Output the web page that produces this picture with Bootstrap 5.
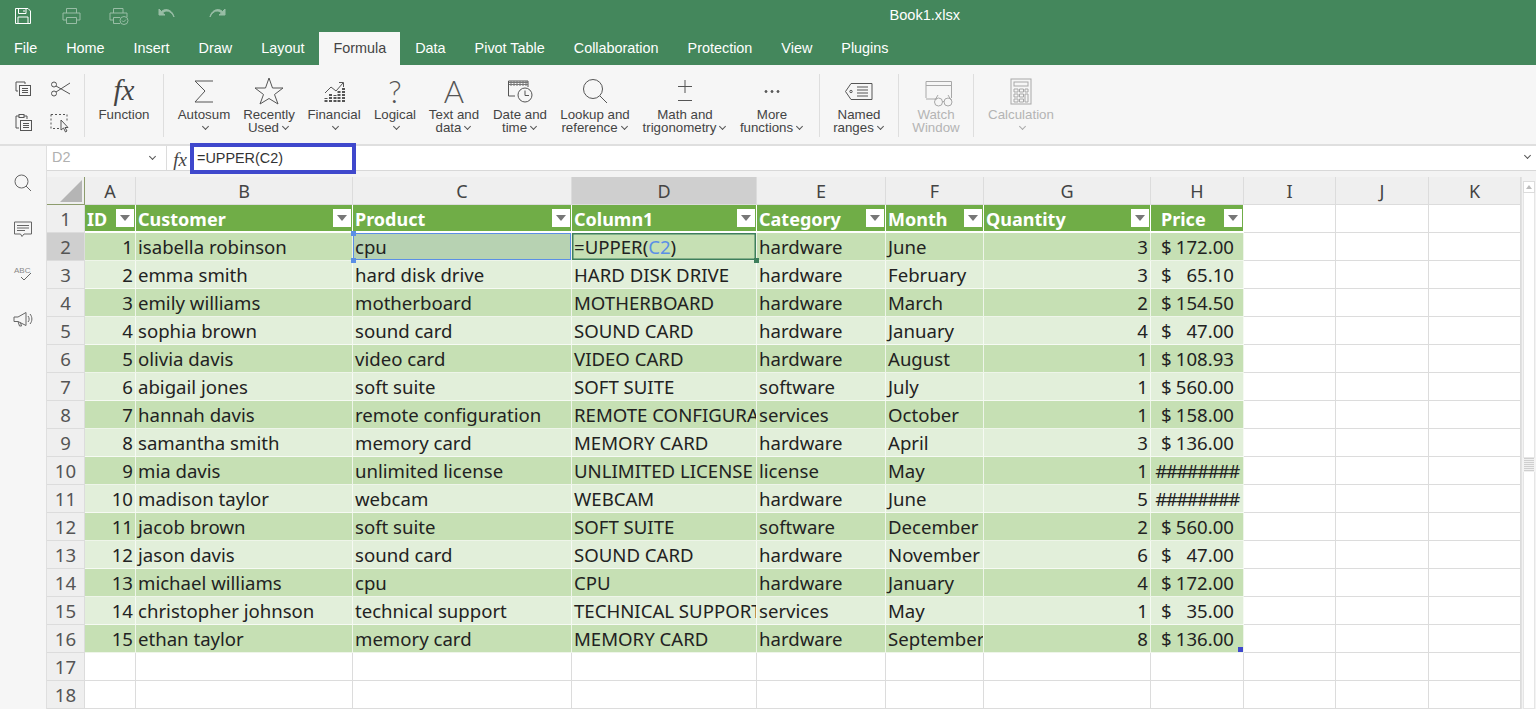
<!DOCTYPE html>
<html lang="en">
<head>
  <meta charset="UTF-8" />
  <title>Book1.xlsx</title>
  <meta name="viewport" content="width=device-width, initial-scale=1" />
  <link href="https://cdn.jsdelivr.net/npm/bootstrap@5.3.3/dist/css/bootstrap.min.css" rel="stylesheet" />
  <style>
    body { height: 709px; overflow: hidden; background: #fff; font-family: "Liberation Sans", Arial, sans-serif; color: #444; }
    svg { display: block; fill: none; stroke: #555; stroke-width: 1; }

    /* title bar and tabs */
    .title-bar { height: 32px; background: #44875c; color: #fff; font-size: 14.6px; }
    .qa-row { margin-left: -1px; }
    .qa-icon { width: 48px; display: flex; justify-content: center; }
    .qa-icon svg { stroke: #fff; }
    .qa-dim { opacity: .45; }
    .qa-last { margin-left: 2px; }
    .doc-title { margin-left: auto; margin-right: 576px; }
    .tab-bar { height: 33px; background: #44875c; }
    .tab-item { padding: 0 14.5px; line-height: 33px; font-size: 14.4px; color: #fff; }
    .tab-item.current { background: #f6f6f6; color: #444; padding: 0 14px; margin: 0 .5px; }
    .tab-item:first-child { padding-left: 14px; }

    /* ribbon */
    .ribbon { height: 81px; background: #f6f6f6; border-bottom: 2px solid #dfdfdf; }
    .rb-clip { width: 84px; padding: 14px 0 0 14px; row-gap: 14px; column-gap: 16px; display: grid; grid-template-columns: 20px 20px; grid-auto-rows: 20px; }
    .rb-sep { width: 1px; height: 63px; margin-top: 9px; background: #dedede; flex: none; }
    .rb-item { padding-top: 9px; font-size: 13.3px; line-height: 13.4px; text-align: center; color: #444; flex: none; white-space: nowrap; }
    .rb-off { color: #b4b4b4; }
    .rb-off svg { stroke: #a8a8a8; }
    .rb-slot { height: 34px; display: flex; justify-content: center; }
    .w-fn { width: 78px; }
    .w-sum { width: 66px; margin-left: 7px; }
    .w-rec { width: 64px; }
    .w-fin { width: 66px; }
    .w-log { width: 56px; }
    .w-txt { width: 62px; }
    .w-dat { width: 70px; }
    .w-loo { width: 80px; }
    .w-mat { width: 100px; }
    .w-mor { width: 74px; }
    .w-gap { width: 10px; flex: none; }
    .w-nam { width: 78px; }
    .w-wat { width: 74px; }
    .w-cal { width: 94px; }
    .chv { display: inline-block; width: 5px; height: 5px; border-right: 1px solid #555; border-bottom: 1px solid #555; transform: rotate(45deg); margin: 0 2px 3px 4px; }
    .rb-off .chv { border-color: #aaa; }
    .fx-mark { font-family: "Liberation Serif", serif; font-style: italic; color: #444; }
    .fx-large { font-size: 29px; align-items: center; }
    .big-glyph { font-family: Lato, sans-serif; font-weight: 300; font-size: 31px; line-height: 34px; color: #555; }

    /* side rail */
    .side-rail { width: 47px; flex: none; background: #f6f6f6; border-right: 1px solid #dfdfdf; padding-top: 27px; row-gap: 25.7px; }
    .side-rail svg { stroke: #666; }
    .abc-tag { font-family: "Liberation Sans", sans-serif; font-size: 8px; fill: #888; stroke: none; }

    /* formula bar */
    .fx-bar { height: 25px; border-bottom: 1px solid #d8d8d8; font-size: 14.4px; }
    .name-box { width: 120px; height: 24px; padding: 0 9px 0 5px; color: #b0b0b0; font-size: 14.4px; border-right: 1px solid #dcdcdc; }
    .fx-small { width: 23px; font-size: 19px; text-align: right; padding-right: 3px; }
    .fx-input { width: 166px; height: 31px; margin-top: -3px; border: 4px solid #3f48cc; background: #fff; padding-left: 3px; color: #333; line-height: 23px; position: relative; z-index: 2; }
    .fx-tail { margin-right: 4px; }

    /* sheet */
    .sheet-gap { height: 6px; background: #f3f3f3; }
    .sheet-wrap { height: 532px; overflow: hidden; }
    .sheet { border-collapse: separate; border-spacing: 0; table-layout: fixed; width: 1474px; font-family: "Noto Sans", sans-serif; font-size: 18.6px; color: #222; }
    .sheet td, .sheet th { height: 28px; padding: 0 0 0 2px; border-right: 1px solid #dcdcdc; border-bottom: 1px solid #dcdcdc; white-space: nowrap; overflow: hidden; font-weight: 400; line-height: 26px; }
    .c-h { width: 38px; } .c-a { width: 51px; } .c-b { width: 217px; } .c-c { width: 219px; } .c-d { width: 185px; }
    .c-e { width: 129px; } .c-f { width: 98px; } .c-g { width: 167px; } .c-p { width: 93px; } .c-i { width: 92px; } .c-j { width: 93px; } .c-k { width: 92px; }
    .sheet .col-head { background: #efefef; color: #444; text-align: center; padding: 0; font-size: 18px; }
    .sheet .col-head.on { background: #cfcfcf; color: #444; }
    .sheet .row-head { background: #efefef; color: #555; text-align: center; padding: 0; }
    .sheet .row-head.on { background: #cfcfcf; }
    .sheet .corner { background: #efefef; border-right-color: #8d9c6d; border-bottom-color: #8d9c6d; padding: 0; }
    .sheet .hd { background: #70ad47; color: #fff; font-weight: 700; font-size: 18px; border-right-color: #fff; border-bottom: 2px solid #fff; padding-right: 1px; }
    .hd-in { height: 26px; line-height: 28px; }
    .flt { width: 18px; height: 18px; background: #fff; display: flex; align-items: center; justify-content: center; margin-top: 4px; flex: none; }
    .flt::after { content: ""; border: 5px solid transparent; border-top: 6px solid #777; border-bottom: 0; }
    .sheet .dk { background: #c6e0b4; border-color: #eef5e9; }
    .sheet .lt { background: #e2efda; border-color: #f6faf3; }
    .sheet .num { text-align: right; padding-right: 2px; }
    .money { padding: 0 9px 0 8px; }
    .sheet .hashes { text-align: center; padding-left: 0; letter-spacing: -1.6px; }
    .sheet .sel-src { background: #b7d2b2; overflow: visible; position: relative; box-shadow: inset 0 0 0 1px #5b8fe6; }
    .sheet .sel-cur { overflow: visible; position: relative; box-shadow: inset 0 0 0 1.5px #3e7f5c; }
    .sheet .sel-end { overflow: visible; position: relative; }
    .grip { position: absolute; width: 5px; height: 5px; background: #5b8fe6; z-index: 3; }
    .grip-tl { left: -2px; top: -2px; } .grip-bl { left: -2px; bottom: -3px; }
    .grip-cur { right: -3px; bottom: -3px; background: #3e7f5c; }
    .grip-end { right: 0; bottom: 0; background: #3f48cc; }
    .ref-c2 { color: #5b8fe6; }

    .v-scroll { width: 15px; flex: none; background: #f3f3f3; border-left: 1px solid #e2e2e2; padding: 4px 1px 0; }
    .sc-btn { height: 12px; background: #fff; border: 1px solid #dcdcdc; display: flex; align-items: center; justify-content: center; }
    .sc-btn::after { content: ""; border: 3px solid transparent; border-bottom: 4px solid #bbb; border-top: 0; }
    .sc-track { height: 265px; background: #fff; border: 1px solid #e6e6e6; border-top: 0; }
    .sc-grip { height: 14px; margin: 0 1px; background: repeating-linear-gradient(#cfcfcf 0 1px, #f0f0f0 1px 2px); }
    .sc-rest { height: 237px; background: #fff; border: 1px solid #e6e6e6; border-top: 0; }
  </style>
</head>
<body>
  <!-- title bar -->
  <div class="title-bar d-flex align-items-center">
    <div class="d-flex qa-row">
      <div class="qa-icon"><svg width="16" height="16" viewBox="0 0 16 16"><path d="M.5.5H13L15.500 3V15.500H.5Z"/><path d="M3.500.5V5.500H11V.5M3 15.500V9H13V15.500M9 2V4"/></svg></div>
      <div class="qa-icon qa-dim"><svg width="19" height="16" viewBox="0 0 19 16"><path d="M4.500 5V.5H14.500V5M4.500 12H1V5H18V12H14.500M4.500 9.500H14.500V15.500H4.500Z"/></svg></div>
      <div class="qa-icon qa-dim"><svg width="20" height="17" viewBox="0 0 20 17"><path d="M4.500 5V.5H14V5M4 12H1V5H18V9M4.500 9.500H11M4.500 9.500V15.500H11"/><circle cx="15" cy="12.500" r="4"/><path d="M13 12.500L14.500 14L17 11.500"/></svg></div>
      <div class="qa-icon qa-dim"><svg width="18" height="12" viewBox="0 0 18 12"><path d="M1 1V7H7L4.500 5C8 1.500 13 2.500 16 9C15 3 8.500-1 3.500 3.500Z" fill="#fff"/></svg></div>
      <div class="qa-icon qa-dim qa-last"><svg width="18" height="12" viewBox="0 0 18 12"><path d="M17 1V7H11L13.500 5C10 1.500 5 2.500 2 9C3 3 9.500-1 14.500 3.500Z" fill="#fff"/></svg></div>
    </div>
    <div class="doc-title">Book1.xlsx</div>
  </div>
  <div class="tab-bar d-flex">
    <div class="tab-item">File</div>
    <div class="tab-item">Home</div>
    <div class="tab-item">Insert</div>
    <div class="tab-item">Draw</div>
    <div class="tab-item">Layout</div>
    <div class="tab-item current">Formula</div>
    <div class="tab-item">Data</div>
    <div class="tab-item">Pivot Table</div>
    <div class="tab-item">Collaboration</div>
    <div class="tab-item">Protection</div>
    <div class="tab-item">View</div>
    <div class="tab-item">Plugins</div>
  </div>

  <!-- ribbon -->
  <div class="ribbon d-flex">
    <div class="rb-clip">
      <svg width="20" height="20" viewBox="0 0 20 20"><path d="M4 12H2V3H11V5"/><rect x="5.500" y="6.500" width="11" height="10" fill="#f6f6f6"/><path d="M8 9.500H14M8 11.500H14M8 13.500H14"/></svg>
      <svg width="22" height="20" viewBox="0 0 22 20"><circle cx="4" cy="5.500" r="2.500"/><circle cx="4" cy="14.500" r="2.500"/><path d="M6 7L20 15M6 13L20 4"/></svg>
      <svg width="20" height="20" viewBox="0 0 20 20"><path d="M5 15H2V3H5M10 3H13V6"/><rect x="5" y="1.500" width="5" height="3"/><rect x="6.500" y="7.500" width="11" height="10" fill="#f6f6f6"/><path d="M9 10.500H15M9 12.500H15M9 14.500H15"/></svg>
      <svg width="22" height="20" viewBox="0 0 22 20"><path d="M1 1.500H17V9M1 1.500V15.500H10" stroke-dasharray="2 2"/><path d="M11 7V17L13.500 15L15.500 19L17 18L15 14.500H18Z"/></svg>
    </div>
    <div class="rb-sep"></div>
    <div class="rb-item w-fn">
      <div class="rb-slot fx-mark fx-large">fx</div>
      Function
    </div>
    <div class="rb-sep"></div>
    <div class="rb-item w-sum">
      <div class="rb-slot"><svg width="36" height="34" viewBox="0 0 36 34"><path d="M27 7H9L19 17L9 28H27"/></svg></div>
      Autosum<br /><span class="chv"></span>
    </div>
    <div class="rb-item w-rec">
      <div class="rb-slot"><svg width="36" height="34" viewBox="0 0 36 34"><path d="M18 4L21.500 14H32L23.500 20.500L27 30L18 24.500L9 30L12.500 20.500L4 14H14.500Z"/></svg></div>
      Recently<br />Used<span class="chv"></span>
    </div>
    <div class="rb-item w-fin">
      <div class="rb-slot"><svg width="36" height="34" viewBox="0 0 36 34"><path d="M9 19L15 13L20 17L27 9M23 8.500H27.500V13"/><path d="M10 28V24M14.500 28V20M19 28V21M23 28V17M27.500 28V14" stroke-width="3" stroke-dasharray="2 1"/></svg></div>
      Financial<br /><span class="chv"></span>
    </div>
    <div class="rb-item w-log">
      <div class="rb-slot big-glyph">?</div>
      Logical<br /><span class="chv"></span>
    </div>
    <div class="rb-item w-txt">
      <div class="rb-slot big-glyph">A</div>
      Text and<br />data<span class="chv"></span>
    </div>
    <div class="rb-item w-dat">
      <div class="rb-slot"><svg width="36" height="34" viewBox="0 0 36 34"><path d="M13 22H6.500V7H26V13"/><path d="M7 8.500H26M7 10.500H26M9 7V12M12 7V12M15 7V12M18 7V12M21 7V12M24 7V12" stroke="#777"/><circle cx="23" cy="21" r="7" fill="#f6f6f6"/><path d="M23 16.500V21.500H27"/></svg></div>
      Date and<br />time<span class="chv"></span>
    </div>
    <div class="rb-item w-loo">
      <div class="rb-slot"><svg width="36" height="34" viewBox="0 0 36 34"><circle cx="16" cy="15" r="9.500"/><path d="M23 22L30 29"/></svg></div>
      Lookup and<br />reference<span class="chv"></span>
    </div>
    <div class="rb-item w-mat">
      <div class="rb-slot"><svg width="36" height="34" viewBox="0 0 36 34"><path d="M18 6V19M11 12.500H25M11 26.500H25"/></svg></div>
      Math and<br />trigonometry<span class="chv"></span>
    </div>
    <div class="rb-item w-mor">
      <div class="rb-slot"><svg width="36" height="34" viewBox="0 0 36 34"><circle cx="12" cy="17.500" r="1" fill="#555"/><circle cx="18" cy="17.500" r="1" fill="#555"/><circle cx="24" cy="17.500" r="1" fill="#555"/></svg></div>
      More<br />functions<span class="chv"></span>
    </div>
    <div class="w-gap"></div>
    <div class="rb-sep"></div>
    <div class="rb-item w-nam">
      <div class="rb-slot"><svg width="36" height="34" viewBox="0 0 36 34"><path d="M10 9.500H31V25.500H10L4.500 17.500Z"/><circle cx="10" cy="17.500" r="1.200"/><path d="M16 13H27M16 16H27M16 19H27M16 22H27"/></svg></div>
      Named<br />ranges<span class="chv"></span>
    </div>
    <div class="rb-sep"></div>
    <div class="rb-item w-wat rb-off">
      <div class="rb-slot"><svg width="36" height="34" viewBox="0 0 36 34"><path d="M8 24V7.500H33.500V24M8 11.500H33.500M8 25H19"/><circle cx="20.500" cy="28" r="4"/><circle cx="30" cy="28" r="4"/><path d="M24.500 27.500H26M17 26L20 21M33 26L30 21"/></svg></div>
      Watch<br />Window
    </div>
    <div class="rb-sep"></div>
    <div class="rb-item w-cal rb-off">
      <div class="rb-slot"><svg width="36" height="34" viewBox="0 0 36 34"><rect x="8" y="5" width="20" height="25"/><rect x="11" y="8" width="14" height="4"/><path d="M11 15H15V18H11ZM16.500 15H20.500V18H16.500ZM22 15H25V18H22ZM11 20H15V23H11ZM16.500 20H20.500V23H16.500ZM11 25H15V28H11ZM16.500 25H20.500V28H16.500ZM22 20H25V28H22Z"/></svg></div>
      Calculation<br /><span class="chv"></span>
    </div>
  </div>

  <div class="d-flex">
    <!-- side rail -->
    <div class="side-rail d-flex flex-column align-items-center">
      <svg width="20" height="20" viewBox="0 0 20 20"><circle cx="8.500" cy="8.500" r="6.500"/><path d="M13 13L18 18"/></svg>
      <svg width="20" height="20" viewBox="0 0 20 20"><path d="M1.500 3H18.500V15H11L9 17.500L7.500 15H1.500ZM4 6.500H16M4 9H16M4 11.500H12"/></svg>
      <svg width="20" height="20" viewBox="0 0 20 20"><text x="1" y="9" class="abc-tag">ABC</text><path d="M8 13L11 16L18 9"/></svg>
      <svg width="20" height="20" viewBox="0 0 20 20"><path d="M1 7H5L13 2.500V15.500L5 11.500H1ZM5 11.500L6.500 16H8.500L7.500 12.500M15 6C16.500 8 16.500 10.500 15 12M17 4C19.500 7 19.500 11 17 14"/></svg>
    </div>

    <div class="flex-grow-1">
      <!-- formula bar -->
      <div class="fx-bar d-flex">
        <div class="name-box d-flex align-items-center justify-content-between">D2<span class="chv"></span></div>
        <div class="fx-small fx-mark">fx</div>
        <div class="fx-input">=UPPER(C2)</div>
        <div class="ms-auto fx-tail"><span class="chv"></span></div>
      </div>
      <div class="sheet-gap"></div>

      <div class="sheet-wrap d-flex align-items-start">
        <table class="sheet">
          <colgroup><col class="c-h" /><col class="c-a" /><col class="c-b" /><col class="c-c" /><col class="c-d" /><col class="c-e" /><col class="c-f" /><col class="c-g" /><col class="c-p" /><col class="c-i" /><col class="c-j" /><col class="c-k" /></colgroup>
          <tr>
            <th class="corner"><svg width="37" height="27" viewBox="0 0 37 27"><path d="M13 25L35 3V25Z" fill="#b5b5b5" stroke="none"/></svg></th>
            <th class="col-head">A</th><th class="col-head">B</th><th class="col-head">C</th><th class="col-head on">D</th><th class="col-head">E</th><th class="col-head">F</th><th class="col-head">G</th><th class="col-head">H</th><th class="col-head">I</th><th class="col-head">J</th><th class="col-head">K</th>
          </tr>
          <tr>
            <td class="row-head">1</td>
            <td class="hd"><div class="hd-in d-flex justify-content-between">ID<span class="flt"></span></div></td>
            <td class="hd"><div class="hd-in d-flex justify-content-between">Customer<span class="flt"></span></div></td>
            <td class="hd"><div class="hd-in d-flex justify-content-between">Product<span class="flt"></span></div></td>
            <td class="hd"><div class="hd-in d-flex justify-content-between">Column1<span class="flt"></span></div></td>
            <td class="hd"><div class="hd-in d-flex justify-content-between">Category<span class="flt"></span></div></td>
            <td class="hd"><div class="hd-in d-flex justify-content-between">Month<span class="flt"></span></div></td>
            <td class="hd"><div class="hd-in d-flex justify-content-between">Quantity<span class="flt"></span></div></td>
            <td class="hd"><div class="hd-in d-flex justify-content-between money pe-0">Price<span class="flt"></span></div></td>
            <td></td><td></td><td></td>
          </tr>
          <tr>
            <td class="row-head on">2</td><td class="dk num">1</td><td class="dk">isabella robinson</td>
            <td class="dk sel-src">cpu<span class="grip grip-tl"></span><span class="grip grip-bl"></span></td>
            <td class="dk sel-cur">=UPPER(<span class="ref-c2">C2</span>)<span class="grip grip-cur"></span></td>
            <td class="dk">hardware</td><td class="dk">June</td><td class="dk num">3</td><td class="dk"><div class="money d-flex justify-content-between"><span>$</span><span>172.00</span></div></td><td></td><td></td><td></td>
          </tr>
          <tr>
            <td class="row-head">3</td><td class="lt num">2</td><td class="lt">emma smith</td><td class="lt">hard disk drive</td><td class="lt">HARD DISK DRIVE</td><td class="lt">hardware</td><td class="lt">February</td><td class="lt num">3</td><td class="lt"><div class="money d-flex justify-content-between"><span>$</span><span>65.10</span></div></td><td></td><td></td><td></td>
          </tr>
          <tr>
            <td class="row-head">4</td><td class="dk num">3</td><td class="dk">emily williams</td><td class="dk">motherboard</td><td class="dk">MOTHERBOARD</td><td class="dk">hardware</td><td class="dk">March</td><td class="dk num">2</td><td class="dk"><div class="money d-flex justify-content-between"><span>$</span><span>154.50</span></div></td><td></td><td></td><td></td>
          </tr>
          <tr>
            <td class="row-head">5</td><td class="lt num">4</td><td class="lt">sophia brown</td><td class="lt">sound card</td><td class="lt">SOUND CARD</td><td class="lt">hardware</td><td class="lt">January</td><td class="lt num">4</td><td class="lt"><div class="money d-flex justify-content-between"><span>$</span><span>47.00</span></div></td><td></td><td></td><td></td>
          </tr>
          <tr>
            <td class="row-head">6</td><td class="dk num">5</td><td class="dk">olivia davis</td><td class="dk">video card</td><td class="dk">VIDEO CARD</td><td class="dk">hardware</td><td class="dk">August</td><td class="dk num">1</td><td class="dk"><div class="money d-flex justify-content-between"><span>$</span><span>108.93</span></div></td><td></td><td></td><td></td>
          </tr>
          <tr>
            <td class="row-head">7</td><td class="lt num">6</td><td class="lt">abigail jones</td><td class="lt">soft suite</td><td class="lt">SOFT SUITE</td><td class="lt">software</td><td class="lt">July</td><td class="lt num">1</td><td class="lt"><div class="money d-flex justify-content-between"><span>$</span><span>560.00</span></div></td><td></td><td></td><td></td>
          </tr>
          <tr>
            <td class="row-head">8</td><td class="dk num">7</td><td class="dk">hannah davis</td><td class="dk">remote configuration</td><td class="dk">REMOTE CONFIGURATION</td><td class="dk">services</td><td class="dk">October</td><td class="dk num">1</td><td class="dk"><div class="money d-flex justify-content-between"><span>$</span><span>158.00</span></div></td><td></td><td></td><td></td>
          </tr>
          <tr>
            <td class="row-head">9</td><td class="lt num">8</td><td class="lt">samantha smith</td><td class="lt">memory card</td><td class="lt">MEMORY CARD</td><td class="lt">hardware</td><td class="lt">April</td><td class="lt num">3</td><td class="lt"><div class="money d-flex justify-content-between"><span>$</span><span>136.00</span></div></td><td></td><td></td><td></td>
          </tr>
          <tr>
            <td class="row-head">10</td><td class="dk num">9</td><td class="dk">mia davis</td><td class="dk">unlimited license</td><td class="dk">UNLIMITED LICENSE</td><td class="dk">license</td><td class="dk">May</td><td class="dk num">1</td><td class="dk hashes">########</td><td></td><td></td><td></td>
          </tr>
          <tr>
            <td class="row-head">11</td><td class="lt num">10</td><td class="lt">madison taylor</td><td class="lt">webcam</td><td class="lt">WEBCAM</td><td class="lt">hardware</td><td class="lt">June</td><td class="lt num">5</td><td class="lt hashes">########</td><td></td><td></td><td></td>
          </tr>
          <tr>
            <td class="row-head">12</td><td class="dk num">11</td><td class="dk">jacob brown</td><td class="dk">soft suite</td><td class="dk">SOFT SUITE</td><td class="dk">software</td><td class="dk">December</td><td class="dk num">2</td><td class="dk"><div class="money d-flex justify-content-between"><span>$</span><span>560.00</span></div></td><td></td><td></td><td></td>
          </tr>
          <tr>
            <td class="row-head">13</td><td class="lt num">12</td><td class="lt">jason davis</td><td class="lt">sound card</td><td class="lt">SOUND CARD</td><td class="lt">hardware</td><td class="lt">November</td><td class="lt num">6</td><td class="lt"><div class="money d-flex justify-content-between"><span>$</span><span>47.00</span></div></td><td></td><td></td><td></td>
          </tr>
          <tr>
            <td class="row-head">14</td><td class="dk num">13</td><td class="dk">michael williams</td><td class="dk">cpu</td><td class="dk">CPU</td><td class="dk">hardware</td><td class="dk">January</td><td class="dk num">4</td><td class="dk"><div class="money d-flex justify-content-between"><span>$</span><span>172.00</span></div></td><td></td><td></td><td></td>
          </tr>
          <tr>
            <td class="row-head">15</td><td class="lt num">14</td><td class="lt">christopher johnson</td><td class="lt">technical support</td><td class="lt">TECHNICAL SUPPORT</td><td class="lt">services</td><td class="lt">May</td><td class="lt num">1</td><td class="lt"><div class="money d-flex justify-content-between"><span>$</span><span>35.00</span></div></td><td></td><td></td><td></td>
          </tr>
          <tr>
            <td class="row-head">16</td><td class="dk num">15</td><td class="dk">ethan taylor</td><td class="dk">memory card</td><td class="dk">MEMORY CARD</td><td class="dk">hardware</td><td class="dk">September</td><td class="dk num">8</td><td class="dk sel-end"><div class="money d-flex justify-content-between"><span>$</span><span>136.00</span></div><span class="grip grip-end"></span></td><td></td><td></td><td></td>
          </tr>
          <tr>
            <td class="row-head">17</td><td></td><td></td><td></td><td></td><td></td><td></td><td></td><td></td><td></td><td></td><td></td>
          </tr>
          <tr>
            <td class="row-head">18</td><td></td><td></td><td></td><td></td><td></td><td></td><td></td><td></td><td></td><td></td><td></td>
          </tr>
        </table>
        <div class="v-scroll">
          <div class="sc-btn"></div>
          <div class="sc-track"></div>
          <div class="sc-grip"></div>
          <div class="sc-rest"></div>
        </div>
      </div>
    </div>
  </div>

  <script src="https://cdn.jsdelivr.net/npm/bootstrap@5.3.3/dist/js/bootstrap.bundle.min.js"></script>
</body>
</html>
